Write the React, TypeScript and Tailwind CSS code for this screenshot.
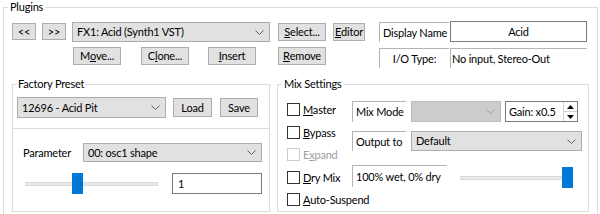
import React from 'react';

type P = { className?: string; children?: React.ReactNode };

const Btn: React.FC<P> = ({ className = '', children }) => (
    <div className={`flex items-center justify-center bg-[#e1e1e1] border border-[#adadad] whitespace-nowrap ${className}`}>
        {children}
    </div>
);

const Chevron = ({ color = '#606060' }: { color?: string }) => (
    <svg width="9" height="5" viewBox="0 0 9 5" className="shrink-0">
        <path d="M0.5 0.5 L4.5 4.5 L8.5 0.5" fill="none" stroke={color} strokeWidth="1" />
    </svg>
);

const Combo: React.FC<P & { disabled?: boolean }> = ({ className = '', children, disabled }) => (
    <div
        className={`flex items-center justify-between pl-[4px] pr-[5px] whitespace-nowrap border ${
            disabled ? 'bg-[#cccccc] border-[#bfbfbf]' : 'bg-[#e1e1e1] border-[#adadad]'
        } ${className}`}
    >
        <span>{children}</span>
        <Chevron color={disabled ? '#a0a0a0' : '#606060'} />
    </div>
);

const Static: React.FC<P> = ({ className = '', children }) => (
    <div className={`flex items-center border-t border-l border-[#b4b4b4] whitespace-nowrap ${className}`}>{children}</div>
);

const Check: React.FC<P & { disabled?: boolean }> = ({ className = '', children, disabled }) => (
    <div className={`flex items-center h-[15px] whitespace-nowrap ${disabled ? 'text-[#a0a0a0]' : ''} ${className}`}>
        <div className={`shrink-0 w-[13px] h-[13px] bg-white border ${disabled ? 'border-[#cccccc]' : 'border-[#333333]'}`} />
        <span className="ml-[3px]">{children}</span>
    </div>
);

const Slider = ({ className = '', pos }: { className?: string; pos: number }) => (
    <div className={`relative h-[21px] flex items-center ${className}`}>
        <div className="w-full h-[4px] bg-[#e7eaea] border border-[#dadada]" />
        <div className="absolute top-0 w-[11px] h-[21px] bg-[#0078d7]" style={{ left: pos }} />
    </div>
);

const Spin = () => (
    <div className="flex flex-col shrink-0 w-[14px] h-full border-l border-[#d0d0d0]">
        <div className="flex-1 flex items-center justify-center border-b border-[#d0d0d0]">
            <svg width="7" height="4" viewBox="0 0 7 4"><path d="M0 4 L3.5 0 L7 4 Z" fill="#000" /></svg>
        </div>
        <div className="flex-1 flex items-center justify-center">
            <svg width="7" height="4" viewBox="0 0 7 4"><path d="M0 0 L3.5 4 L7 0 Z" fill="#000" /></svg>
        </div>
    </div>
);

export default function App() {
    return (
        <div className="w-[600px] h-[214px] overflow-hidden bg-white text-black text-[11px]/[14px] tracking-[-0.2px] font-[Lato,sans-serif]">
            <fieldset className="ml-[3px] w-[595px] h-[230px] border border-[#dcdcdc]">
                <legend className="ml-[4px] px-[2px]">Plugins</legend>
                <div className="pl-[8px] pt-[8px]">
                    {/* plugin slot row */}
                    <div className="flex items-start">
                        <Btn className="w-[24px] h-[17px] mt-[1px]">&lt;&lt;</Btn>
                        <Btn className="w-[24px] h-[17px] mt-[1px] ml-[6px]">&gt;&gt;</Btn>
                        <Combo className="w-[198px] h-[20px] ml-[6px]">FX1: Acid (Synth1 VST)</Combo>
                        <Btn className="w-[48px] h-[18px] mt-[1px] ml-[8px]">
                            <span className="underline">S</span>elect...
                        </Btn>
                        <Btn className="w-[32px] h-[18px] mt-[1px] ml-[7px]">
                            <span className="underline">E</span>ditor
                        </Btn>
                        <Static className="w-[70px] h-[20px] ml-[14px] pl-[3px]">Display Name</Static>
                        <div className="w-[137px] h-[21px] -mt-[1px] ml-[1px] flex items-center justify-center border border-[#7a7a7a]">
                            Acid
                        </div>
                    </div>

                    <div className="flex items-start mt-[5px]">
                        <Btn className="w-[48px] h-[18px] ml-[61px]">
                            M<span className="underline">o</span>ve...
                        </Btn>
                        <Btn className="w-[48px] h-[18px] ml-[20px]">
                            C<span className="underline">l</span>one...
                        </Btn>
                        <Btn className="w-[48px] h-[18px] ml-[19px]">
                            <span className="underline">I</span>nsert
                        </Btn>
                        <Btn className="w-[48px] h-[18px] ml-[22px]">
                            <span className="underline">R</span>emove
                        </Btn>
                        <Static className="w-[70px] h-[20px] ml-[53px] mt-[1px] justify-center">I/O Type:</Static>
                        <Static className="w-[137px] h-[20px] ml-[1px] mt-[1px] pl-[1px]">No input, Stereo-Out</Static>
                    </div>

                    <div className="flex items-start mt-[9px]">
                        {/* Factory preset */}
                        <fieldset className="w-[258px] h-[135px] border border-[#dcdcdc]">
                            <legend className="ml-[4px] px-[1px]">Factory Preset</legend>
                            <div className="flex items-start mt-[6px] pl-[4px]">
                                <Combo className="w-[149px] h-[21px]">12696 - Acid Pit</Combo>
                                <Btn className="w-[39px] h-[19px] mt-[1px] ml-[7px]">Load</Btn>
                                <Btn className="w-[38px] h-[19px] mt-[1px] ml-[8px]">Save</Btn>
                            </div>
                            <div className="mt-[10px] border-t border-[#dcdcdc]">
                                <div className="flex items-center mt-[14px] pl-[10px]">
                                    <span className="w-[60px]">Parameter</span>
                                    <Combo className="w-[179px] h-[19px]">00: osc1 shape</Combo>
                                </div>
                                <div className="flex items-start mt-[11px] pl-[12px]">
                                    <Slider className="w-[133px]" pos={47} />
                                    <div className="w-[90px] h-[21px] ml-[14px] flex items-center pl-[5px] border border-[#7a7a7a]">1</div>
                                </div>
                            </div>
                        </fieldset>

                        {/* Mix settings */}
                        <fieldset className="w-[312px] h-[135px] ml-[7px] border border-[#dcdcdc]">
                            <legend className="ml-[4px] px-[2px]">Mix Settings</legend>
                            <div className="flex items-start">
                                <div className="w-[74px] shrink-0 pl-[9px] flex flex-col">
                                    <Check className="mt-[11px]">
                                        <span className="underline">M</span>aster
                                    </Check>
                                    <Check className="mt-[8px]">
                                        <span className="underline">B</span>ypass
                                    </Check>
                                    <Check className="mt-[7px]" disabled>
                                        E<span className="underline">x</span>pand
                                    </Check>
                                    <Check className="mt-[8px]">
                                        <span className="underline">D</span>ry Mix
                                    </Check>
                                    <Check className="mt-[7px]">
                                        <span className="underline">A</span>uto-Suspend
                                    </Check>
                                </div>
                                <div className="flex flex-col">
                                    <div className="flex items-start mt-[10px]">
                                        <Static className="w-[54px] h-[21px] pl-[3px]">Mix Mode</Static>
                                        <Combo className="w-[90px] h-[21px] ml-[5px]" disabled />
                                        <div className="w-[73px] h-[21px] ml-[4px] flex items-stretch border border-[#7a7a7a]">
                                            <span className="flex-1 flex items-center pl-[3px] whitespace-nowrap">Gain: x0.5</span>
                                            <Spin />
                                        </div>
                                    </div>
                                    <div className="flex items-start mt-[9px]">
                                        <Static className="w-[54px] h-[20px] pl-[3px]">Output to</Static>
                                        <Combo className="w-[171px] h-[20px] ml-[5px]">Default</Combo>
                                    </div>
                                    <div className="flex items-start mt-[14px]">
                                        <Static className="w-[95px] h-[22px] pl-[3px]">100% wet, 0% dry</Static>
                                        <Slider className="w-[113px] ml-[13px] mt-[2px]" pos={102} />
                                    </div>
                                </div>
                            </div>
                        </fieldset>
                    </div>
                </div>
            </fieldset>
        </div>
    );
}
